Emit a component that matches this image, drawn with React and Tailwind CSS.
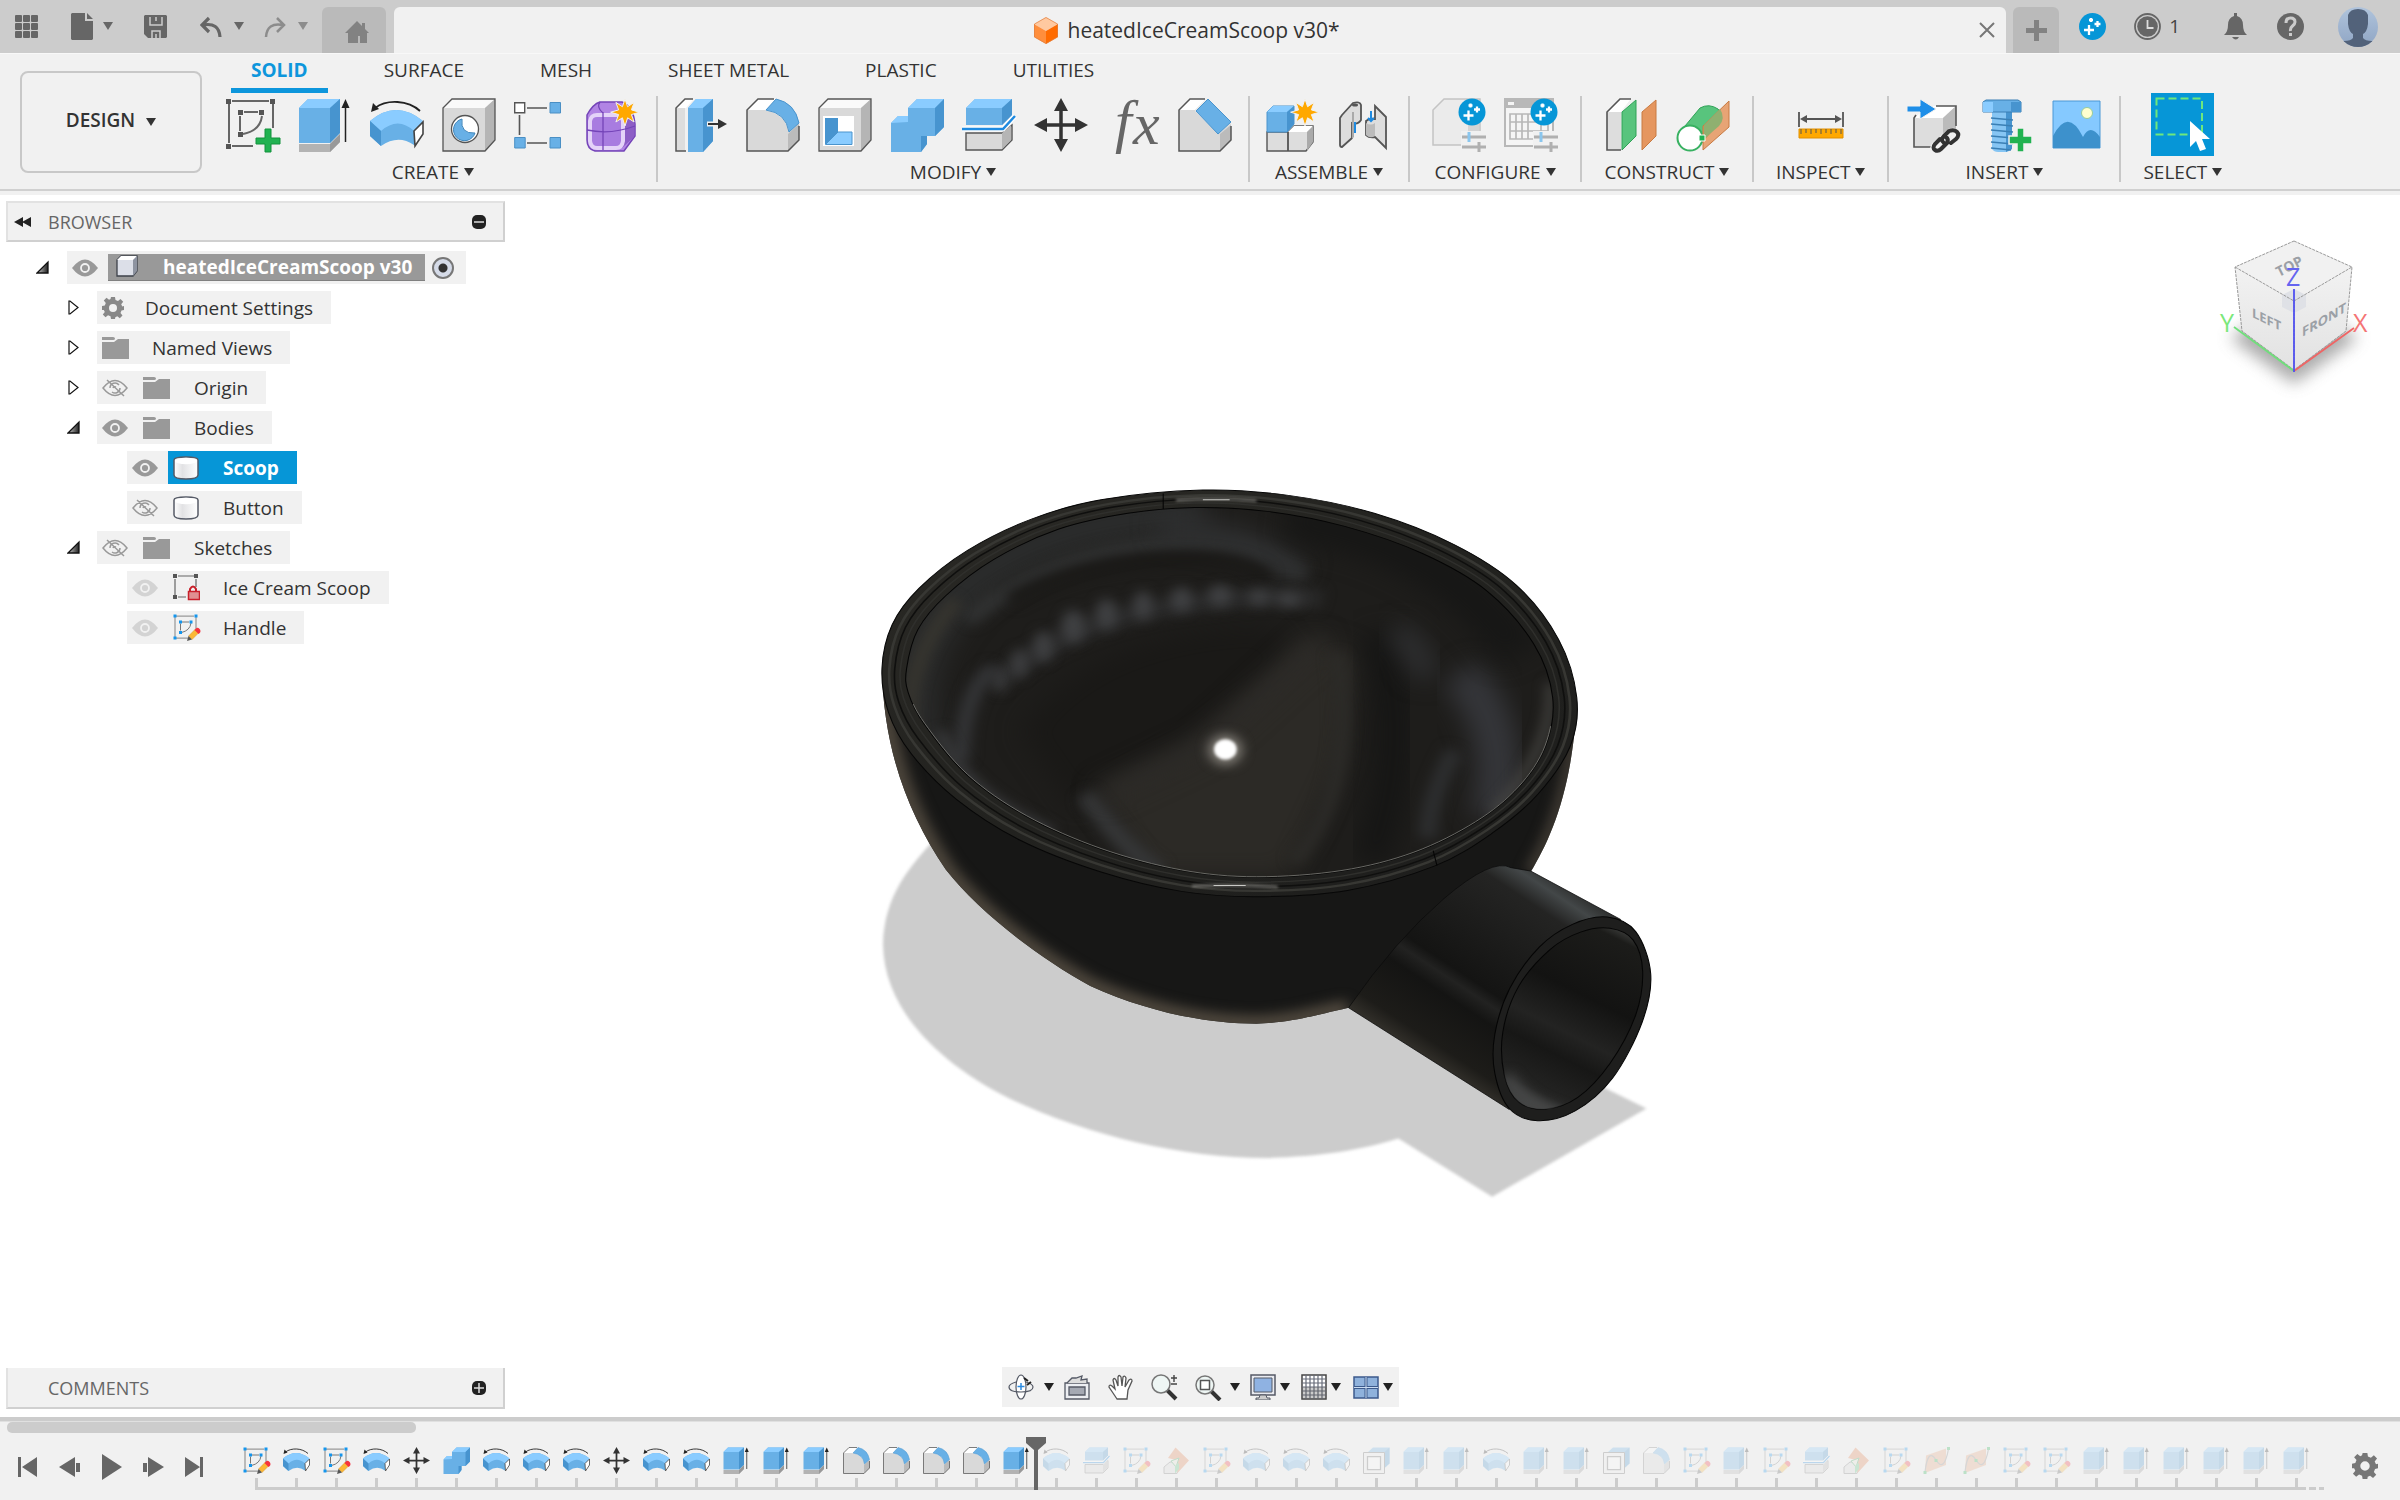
import { useState } from "react";

const BLUE = "#68b0e6";
const BLUE_TOP = "#8accff";
const BLUE_SIDE = "#4794cf";

// catmull-rom curve through a closed list of points
function smooth(pts) {
  const n = pts.length;
  let d = `M${pts[0][0]} ${pts[0][1]}`;
  for (let i = 0; i < n; i++) {
    const p0 = pts[(i - 1 + n) % n];
    const p1 = pts[i];
    const p2 = pts[(i + 1) % n];
    const p3 = pts[(i + 2) % n];
    d += `C${p1[0] + (p2[0] - p0[0]) / 6} ${p1[1] + (p2[1] - p0[1]) / 6} ${p2[0] - (p3[0] - p1[0]) / 6} ${p2[1] - (p3[1] - p1[1]) / 6} ${p2[0]} ${p2[1]}`;
  }
  return d + "Z";
}

function Caret({ className = "" }) {
  return (
    <svg viewBox="0 0 10 8" className={`w-[10px] h-2 shrink-0 ${className}`}>
      <path d="M0 0h10L5 8z" fill="currentColor" />
    </svg>
  );
}

/* ---------- ribbon icons, all on a 54 grid ---------- */

function SketchIcon() {
  return (
    <>
      <path d="M6 3h37M3 6v39M6 48h21M47 6v24" stroke="#666" strokeWidth="2" fill="none" />
      <path d="M18 14h14M14 18v15M36 18q-2 15-19 18" stroke="#666" strokeWidth="2" fill="none" />
      <path d="M0 1h5v5H0zM44 1h5v5h-5zM0 46h5v5H0zM12 12h5v5h-5zM33 12h5v5h-5zM12 34h5v5h-5z" fill="#555" />
      <path d="M39 31h6v9h9v6h-9v8h-6v-8h-9v-6h9z" fill="#21b251" stroke="#12923c" />
    </>
  );
}

function SketchEditIcon() {
  return (
    <>
      <path d="M6 4h36M4 6v40M6 48h24M46 6v24" stroke="#999" strokeWidth="2.500" fill="none" />
      <path d="M18 16h14M15 19v14M36 18q-2 15-19 19" stroke="#777" strokeWidth="2" fill="none" />
      <path d="M1 1h6v6H1zM43 1h6v6h-6zM1 45h6v6H1zM12 13h6v6h-6zM33 13h6v6h-6zM12 34h6v6h-6z" fill="#1496ee" />
      <path d="M45 30l7 7-14 14-7-7z" fill="#fbb836" stroke="#d8942a" />
      <path d="M43 32l4-4q4-2 7 3t-3 9z" fill="#f5333f" />
      <path d="M31 44l7 7-10 3z" fill="#555" />
    </>
  );
}

function ExtrudeIcon() {
  return (
    <>
      <path d="M1 46h31l10-10v8L32 54H1z" fill="#b3b3b3" />
      <path d="M32 54V46l10-10v8z" fill="#999" />
      <path d="M1 10L10 1h32v34L32 45H1z" fill={BLUE} />
      <path d="M1 10L10 1h32L32 10z" fill={BLUE_TOP} />
      <path d="M32 10L42 1v34L32 45z" fill={BLUE_SIDE} />
      <path d="M47.500 44V8" stroke="#222" strokeWidth="1.500" />
      <path d="M47.500 1l4 9h-8z" fill="#222" />
    </>
  );
}

function RevolveIcon() {
  return (
    <>
      <path d="M50 13C38 2 17 1 5 10" stroke="#222" strokeWidth="1.800" fill="none" />
      <path d="M1 14l2-9 6 6z" fill="#222" />
      <path d="M0 23Q26 1 53 23l-9 10v14q-16-11-33 1L0 38z" fill={BLUE} />
      <path d="M0 23Q26 1 53 23l-9 10Q28 18 11 33z" fill={BLUE_TOP} />
      <path d="M0 23l11 10v15L0 38z" fill={BLUE_SIDE} />
      <path d="M44 33l9-9v12l-8 12z" fill="#fff" stroke="#444" strokeWidth="1.600" />
    </>
  );
}

function Box({ children }) {
  return (
    <>
      <path d="M1 10L10 1h43v41L43 53H1z" fill="#d9d9d9" />
      <path d="M1 10L10 1h43L43 10z" fill="#fafafa" />
      <path d="M43 10L53 1v41L43 53z" fill="#b5b5b5" />
      <path d="M1 10L10 1h43v41L43 53H1z" fill="none" stroke="#555" strokeWidth="1.300" />
      {children}
    </>
  );
}

function HoleIcon() {
  return (
    <Box>
      <circle cx="23" cy="31" r="13.500" fill="#fff" stroke="#555" strokeWidth="1.300" />
      <path d="M20 21a11 11 0 1 0 13 14q-15 1-13-14z" fill={BLUE} stroke="#3f86bb" />
    </Box>
  );
}

function PatternIcon() {
  return (
    <>
      <path d="M13 10h20M5.500 17v20M13 45h20" stroke="#555" strokeWidth="1.600" />
      <path d="M.7 4.700h10v10H.7z" fill="#fff" stroke="#555" strokeWidth="1.400" />
      <path d="M36 4.500h10.500V15H36zM.7 39.500h10.500V50H.7zM36 39.500h10.500V50H36z" fill={BLUE} stroke="#4a8fc4" />
    </>
  );
}

function FormIcon() {
  return (
    <>
      <path d="M1 17Q7 6 14 4h22q11 4 13 22v12L38 53H9Q1 51 1 42z" fill="#b184e4" stroke="#7444b8" strokeWidth="1.500" />
      <path d="M36 24q4-2 12-5v20L36 50z" fill="#8d5ec6" />
      <path d="M4 23q1-6 7-6h19q6 0 7 6v20q-1 7-7 7H11q-6 0-7-7z" fill="#a87ce0" stroke="#e4d3f8" strokeWidth="4" />
      <path d="M17 14v38M1 32q24 5 48-4M14 4q-4 5 3 11" fill="none" stroke="#7444b8" strokeWidth="1.300" />
      <Burst />
    </>
  );
}

function Burst() {
  return (
    <path
      d="M39 1l2.600 7.700 6.500-4.300-2.700 7.500 8 2.300-8 2.400 2.700 7.400-6.500-4.200L39 28l-2.600-8.200-6.500 4.200 2.700-7.400-8-2.400 8-2.300-2.700-7.500 6.500 4.300z"
      fill="#ffa800"
      stroke="#f1f1f1"
      strokeWidth="1"
    />
  );
}

function PressPullIcon() {
  return (
    <>
      <path d="M2 10l9-9h9l-9 9v43H2z" fill="#ddd" />
      <path d="M2 10l9-9h9l-8 9z" fill="#fff" />
      <path d="M19 1h-8l-9 9v43h10" fill="none" stroke="#555" strokeWidth="1.500" />
      <path d="M14 10l8-9h17v42L29 54H14z" fill={BLUE} />
      <path d="M14 10l8-9h17l-10 9z" fill={BLUE_TOP} />
      <path d="M29 10L39 1v42L29 54z" fill={BLUE_SIDE} />
      <path d="M33 26h12" stroke="#f1f1f1" strokeWidth="5" />
      <path d="M34 26h12" stroke="#333" strokeWidth="2" />
      <path d="M44 21l9 5-9 5z" fill="#333" />
    </>
  );
}

function FilletIcon() {
  return (
    <>
      <path d="M1 12L12 1h18L20 12q20 5 23 22l10-9v17L42 53H1z" fill="#d9d9d9" />
      <path d="M1 12L12 1h18L20 12z" fill="#fff" />
      <path d="M42 36l11-10v16L42 53z" fill="#bbb" />
      <path d="M28 1H12L1 12v41h41l11-11V28" fill="none" stroke="#555" strokeWidth="1.500" />
      <path d="M20 12L30 1q19 4 23 24l-10 9Q40 15 20 12z" fill={BLUE} stroke="#4a94cd" />
    </>
  );
}

function ChamferIcon() {
  return (
    <>
      <path d="M1 12L12 1h16L17 13l23 23 13-11v17L42 53H1z" fill="#d9d9d9" />
      <path d="M1 12L12 1h16L17 12z" fill="#fff" />
      <path d="M42 36l11-9v15L42 53z" fill="#bbb" />
      <path d="M27 1H12L1 12v41h41l11-11V28" fill="none" stroke="#555" strokeWidth="1.500" />
      <path d="M18 13L30 1l23 23-13 12z" fill={BLUE} stroke="#4a94cd" />
    </>
  );
}

function ShellIcon() {
  return (
    <Box>
      <path d="M5 18h31v30H5z" fill="#fff" />
      <path d="M7 20h13v15L8 46H7z" fill={BLUE_SIDE} />
      <path d="M7.500 46.500L20 34h14v12.500z" fill={BLUE_TOP} stroke="#4a94cd" />
    </Box>
  );
}

function CombineIcon() {
  return (
    <>
      <path d="M1 25l7-7h10v-8l9-9h27v28l-9 9h-8v8l-6 8H1z" fill={BLUE} />
      <path d="M1 25l7-7h10v6zM18 10l9-9h27l-9 9z" fill={BLUE_TOP} />
      <path d="M45 10l9-9v28l-9 9zM31 38h6v8l-6 8z" fill={BLUE_SIDE} />
    </>
  );
}

function SplitIcon() {
  return (
    <>
      <path d="M4 10l9-9h37v16L40 27H4z" fill={BLUE} />
      <path d="M4 10l9-9h37L40 10z" fill={BLUE_TOP} />
      <path d="M40 10l10-9v16L40 27z" fill={BLUE_SIDE} />
      <path d="M4 35h36l10-8v15L40 52H4z" fill="#d9d9d9" stroke="#555" strokeWidth="1.400" />
      <path d="M40 35l9-8v15l-9 9z" fill="#b5b5b5" />
      <path d="M0 31h41l12-13" fill="none" stroke="#fff" strokeWidth="5" />
      <path d="M0 31h41l12-13" fill="none" stroke="#1e8ae0" strokeWidth="2.500" />
    </>
  );
}

function MoveIcon() {
  return (
    <>
      <path d="M27 8v38M8 27h38" stroke="#333" strokeWidth="3.500" />
      <path d="M27 0l7 13H20zM27 54l7-13H20zM0 27l13-7v14zM54 27l-13-7v14z" fill="#333" />
    </>
  );
}

function FxIcon() {
  return (
    <g className="italic font-['Liberation_Serif',serif]" fill="#666">
      <text x="9" y="43" className="text-[60px]">f</text>
      <text x="27" y="46" className="text-[60px]">x</text>
    </g>
  );
}

function NewComponentIcon() {
  return (
    <>
      <path d="M1 34h21v19H1zM22 34l6-6h19v16l-7 9H22z" fill="#ddd" stroke="#555" strokeWidth="1.400" />
      <path d="M22 34l6-6h19l-6 6z" fill="#fff" />
      <path d="M41 34l6-6v16l-6 9z" fill="#aaa" />
      <path d="M22 34v19" stroke="#555" strokeWidth="1.400" />
      <path d="M1 14l6-6h21v18l-7 8H1z" fill={BLUE} stroke="#4a94cd" />
      <path d="M1 14l6-6h21l-7 6z" fill={BLUE_TOP} />
      <path d="M21 14l7-6v18l-7 8z" fill={BLUE_SIDE} />
      <Burst />
    </>
  );
}

function JointIcon() {
  return (
    <>
      <path d="M4 17l11-12q7-2 8 2v15q-3 5-9 3v15L4 49q-2 0-2-2V20z" fill="#ddd" stroke="#555" strokeWidth="1.800" />
      <path d="M14 14v27l2-2V14z" fill="#aaa" />
      <ellipse cx="17" cy="7" rx="3" ry="1.500" fill="#555" />
      <path d="M48 19L37 8v13q-6-1-9 2v14q3 3 9 2l11 11z" fill="#ddd" stroke="#555" strokeWidth="1.800" />
      <path d="M28 25q5 3 9 0v13q-5 3-9-1z" fill="#bbb" />
      <path d="M17 24v11M33 13v10M30 20l3 3 3-3" stroke="#1e8ae0" strokeWidth="2" fill="none" />
    </>
  );
}

function Sparkle({ cx, cy }) {
  return (
    <>
      <circle cx={cx} cy={cy} r="13.500" fill="#0696d7" />
      <path
        transform={`translate(${cx - 13.5} ${cy - 13.5})`}
        d="M10 12v10M5 17h10M18.500 8v6M15.500 11h6M12 5v4M10 7h4"
        stroke="#fff"
        strokeWidth="2.300"
      />
    </>
  );
}

function Sliders() {
  return (
    <>
      <path d="M29 33h26v21H29z" fill="#f1f1f1" />
      <path d="M30 39h24M30 49h24M47 44v10" stroke="#b0b0b0" strokeWidth="3" />
      <path d="M37 34v10" stroke="#8ac6ee" strokeWidth="3" />
    </>
  );
}

function ConfigureIcon() {
  return (
    <>
      <path d="M1 12L12 1h36v33L36 47H1z" fill="#ebebeb" stroke="#c4c4c4" strokeWidth="1.500" />
      <path d="M36 12L47 2v32L36 46z" fill="#d4d4d4" />
      <Sliders />
      <Sparkle cx={40} cy={14} />
    </>
  );
}

function ConfigTableIcon() {
  return (
    <>
      <path d="M1 1h48v47H1z" fill="#f5f5f5" stroke="#b8b8b8" strokeWidth="2" />
      <path d="M1 1h48v9H1z" fill="#b8b8b8" />
      <path d="M4 4h6v3H4z" fill="#f5f5f5" />
      <path d="M6 16h38v25H6zM6 24h38M6 33h38M12 16v25M18 16v25M24 16v25M37 16v25" fill="none" stroke="#b8b8b8" strokeWidth="1.700" />
      <Sliders />
      <Sparkle cx={40} cy={14} />
    </>
  );
}

function OffsetPlaneIcon() {
  return (
    <>
      <path d="M3 14L16 1h11L17 14v38H3z" fill="#ddd" />
      <path d="M3 14L16 1h11L17 14z" fill="#fff" />
      <path d="M27 1H16L3 14v38h14" fill="none" stroke="#555" strokeWidth="1.600" />
      <path d="M18 14L32 2v36L18 52z" fill="#58c47d" stroke="#2fa257" />
      <path d="M38 14L52 2v36L38 52z" fill="#e5965f" stroke="#c87a42" />
    </>
  );
}

function TangentPlaneIcon() {
  return (
    <>
      <path d="M4 34L24 10q9-5 18 1 6 6 1 14L24 47z" fill="#58c47d" stroke="#2fa257" />
      <circle cx="14" cy="40" r="12.500" fill="#fff" stroke="#37b161" strokeWidth="2" />
      <path d="M27 28L53 3v26L27 52z" fill="#e5965f" fillOpacity=".85" stroke="#c87a42" />
      <path d="M28 27l16-16q6 9-1 17L28 41z" fill="#8fb070" />
      <path d="M23 37h6v6h-6z" fill="#21b251" stroke="#fff" />
    </>
  );
}

function MeasureIcon() {
  return (
    <>
      <path d="M5 14v15M49 14v15M8 21h38" stroke="#555" strokeWidth="1.800" />
      <path d="M6 21l7-4v8zM48 21l-7-4v8z" fill="#555" />
      <path d="M5 31h44v9H5z" fill="#ffa800" stroke="#e08f00" />
      <path d="M7 31v5M12 31v4M17 31v5M22 31v4M27 31v5M32 31v4M37 31v5M42 31v4M47 31v5" stroke="#555" />
    </>
  );
}

function InsertDeriveIcon() {
  return (
    <>
      <path d="M9 20l14-12h28v23L38 49H9z" fill="#ddd" />
      <path d="M9 20l14-12h28L38 20z" fill="#fff" />
      <path d="M38 20L51 8v23L38 43z" fill="#bbb" />
      <path d="M31 8h20v20M11 17l-2 3v29h20" fill="none" stroke="#555" strokeWidth="1.600" />
      <path d="M2 8h13V1l16 10-16 10v-7H2z" fill="#1e8ee8" stroke="#f1f1f1" />
      <g fill="none" strokeLinecap="round">
        <path d="M35 43l-5 4q-3 5 1 6t5-2l6-6q2-4-1-6M39 46q-4-3 0-7l6-5q5-2 8 1t-1 7l-5 4" stroke="#f1f1f1" strokeWidth="7" />
        <path d="M35 41l-5 5q-3 4 0 6t6-1l6-6q2-4-1-6M39 45q-4-3 0-7l5-5q5-2 8 1t-1 7l-5 4" stroke="#333" strokeWidth="4" />
      </g>
    </>
  );
}

function FastenerIcon() {
  return (
    <>
      <path d="M15 13h20v38q-3 3-6 3h-8q-4 0-6-3z" fill="#86c5f3" />
      <path d="M29 13h6v38l-6 3z" fill={BLUE_SIDE} />
      <path d="M14 20l22 2M14 26l22 2M14 32l22 2M14 38l22 2M14 44l22 2M14 50l20 2" stroke="#3a7fb4" strokeWidth="1.500" />
      <path d="M6 4l3-2h32l3 2v10H6z" fill={BLUE} stroke="#3a7fb4" />
      <path d="M6 4h10v10H6z" fill={BLUE_TOP} />
      <path d="M34 4h10v10H34z" fill={BLUE_SIDE} />
      <path d="M40 30h7v8h8v8h-8v8h-7v-8h-8v-8h8z" fill="#21b251" stroke="#f1f1f1" strokeWidth="1.500" />
    </>
  );
}

function CanvasIcon() {
  return (
    <>
      <path d="M4 3h47v47H4z" fill="#85c9ff" stroke="#4b98d6" />
      <circle cx="38" cy="15" r="5.500" fill="#ffffcf" stroke="#9c9" />
      <path d="M4 38Q19 9 34 39q7-14 17 0v11H4z" fill="#3d91cc" />
    </>
  );
}

function MidplaneIcon() {
  return (
    <>
      <path d="M2 40l12-10h22L28 53H2z" fill="#ddd" stroke="#777" strokeWidth="2" />
      <path d="M25 1l27 26-23 25V27L10 22z" fill="#e5814f" />
      <path d="M16 28l16-6-6 18z" fill="#e9e9d9" stroke="#2fa257" strokeWidth="2" />
      <path d="M24 38l8-6v12l-8 9z" fill="#58c47d" />
    </>
  );
}

function PathPlaneIcon() {
  return (
    <>
      <path d="M6 17L46 3v33L4 52z" fill="#e9a67d" />
      <path d="M4 50q6-50 22-24t25-22" fill="none" stroke="#888" strokeWidth="2.500" />
      <path d="M1 48h6v6H1zM23 24h6v6h-6zM48 0h6v6h-6z" fill="#21b251" />
    </>
  );
}

function OffsetFaceIcon() {
  return (
    <>
      <path d="M10 10l10-9h33v32L43 42H10z" fill={BLUE} />
      <path d="M43 10L53 1v32l-10 9z" fill={BLUE_SIDE} />
      <path d="M1 11h42v42H1z" fill="#eee" stroke="#666" strokeWidth="2" />
      <path d="M9 19h26v26H9z" fill="#fff" stroke="#666" strokeWidth="2.500" />
    </>
  );
}

function Icon({ of: Shape, className = "w-[54px] h-[54px]" }) {
  return (
    <svg viewBox="0 0 54 54" className={`${className} shrink-0 overflow-visible`}>
      <Shape />
    </svg>
  );
}

const groups = [
  {
    name: "CREATE",
    pad: "px-4",
    tools: [
      ["Create Sketch", SketchIcon],
      ["Extrude", ExtrudeIcon],
      ["Revolve", RevolveIcon],
      ["Hole", HoleIcon],
      ["Pattern", PatternIcon],
      ["Create Form", FormIcon],
    ],
  },
  {
    name: "MODIFY",
    pad: "px-4",
    tools: [
      ["Press Pull", PressPullIcon],
      ["Fillet", FilletIcon],
      ["Shell", ShellIcon],
      ["Combine", CombineIcon],
      ["Split Body", SplitIcon],
      ["Move", MoveIcon],
      ["Change Parameters", FxIcon],
      ["Chamfer", ChamferIcon],
    ],
  },
  { name: "ASSEMBLE", pad: "px-4", tools: [["New Component", NewComponentIcon], ["Joint", JointIcon]] },
  { name: "CONFIGURE", pad: "px-[22px]", tools: [["Configure Model", ConfigureIcon], ["Configuration Table", ConfigTableIcon]] },
  { name: "CONSTRUCT", pad: "px-[22px]", tools: [["Offset Plane", OffsetPlaneIcon], ["Tangent Plane", TangentPlaneIcon]] },
  { name: "INSPECT", pad: "px-[22px]", tools: [["Measure", MeasureIcon]] },
  { name: "INSERT", pad: "px-4", tools: [["Insert Derive", InsertDeriveIcon], ["Insert Fastener", FastenerIcon], ["Canvas", CanvasIcon]] },
];

function TitleBar() {
  return (
    <header className="flex h-[53px] items-end bg-[#ccc] text-[#666]">
      <div className="flex h-[53px] w-[322px] shrink-0 items-start pt-[13px] pl-[15px]">
        <button aria-label="Data panel" className="mr-[33px] pt-[2px]">
          <svg viewBox="0 0 23 23" className="w-[23px] h-[23px]" fill="currentColor">
            {[0, 8, 16].map((y) => [0, 8, 16].map((x) => <rect key={`${x}-${y}`} x={x} y={y} width="7" height="7" rx="1" />))}
          </svg>
        </button>
        <button aria-label="File" className="mr-[31px] flex gap-[10px]">
          <svg viewBox="0 0 22 27" className="w-[22px] h-[27px]" fill="currentColor">
            <path d="M1 0h13v8h8v18l-1 1H1l-1-1V1zM16 0l6 6h-6z" />
          </svg>
          <Caret className="mt-[9px] w-3" />
        </button>
        <button aria-label="Save" className="mr-[33px] pt-[2px]">
          <svg viewBox="0 0 23 23" className="w-[23px] h-[23px]">
            <path d="M1 0h21l1 1v21l-1 1H4l-4-4V1z" fill="currentColor" />
            <path d="M6 2v8h12V2M8 23v-7h8v7M12 19v4M12 2v4" fill="none" stroke="#ccc" strokeWidth="1.500" />
          </svg>
        </button>
        <button aria-label="Undo" className="mr-[20px] flex gap-[12px] pt-[3px]">
          <svg viewBox="0 0 22 22" className="w-[22px] h-[22px]" fill="none" stroke="currentColor" strokeWidth="3.200">
            <path d="M9 2L2 9l7 7M3 9q16-3 17 12" />
          </svg>
          <Caret className="mt-[6px] w-3" />
        </button>
        <button aria-label="Redo" className="flex gap-[12px] pt-[3px] text-[#8c8c8c]">
          <svg viewBox="0 0 22 22" className="w-[22px] h-[22px]" fill="none" stroke="currentColor" strokeWidth="2.500">
            <path d="M13 2l7 7-7 7M19 9Q3 6 2 21" />
          </svg>
          <Caret className="mt-[6px] w-3" />
        </button>
      </div>
      <button aria-label="Home" className="mr-2 flex h-[46px] w-16 shrink-0 items-center justify-center rounded-t-md bg-[#bababa] pl-[6px] pt-1 text-[#828282]">
        <svg viewBox="0 0 24 22" className="w-6 h-[22px]" fill="currentColor">
          <path d="M12 0l5 5V2h3v6l4 4h-2v10h-7v-7h-2v7H3V12H0z" />
        </svg>
      </button>
      <div className="flex h-[46px] flex-1 items-center justify-center rounded-t-md bg-[#f1f1f1]">
        <div className="flex flex-1 items-center justify-center gap-[10px]">
          <svg viewBox="0 0 24 27" className="w-6 h-[27px]">
            <path d="M12 0l12 7-12 7L0 7z" fill="#ffc9a0" />
            <path d="M0 7l12 7v13L0 20z" fill="#ff8e3c" />
            <path d="M24 7l-12 7v13l12-7z" fill="#ff6b00" />
            <path d="M12 .5l11.500 6.500v13L12 26.500.5 20V7z" fill="none" stroke="#e08040" strokeWidth=".7" />
          </svg>
          <h1 className="text-[21px] leading-6 text-[#333]">heatedIceCreamScoop v30*</h1>
        </div>
        <button aria-label="Close document" className="mr-[11px] text-[#777]">
          <svg viewBox="0 0 16 16" className="w-4 h-4" stroke="currentColor" strokeWidth="2">
            <path d="M1 1l14 14M15 1L1 15" />
          </svg>
        </button>
      </div>
      <button aria-label="New document" className="ml-[7px] flex h-[46px] w-[46px] shrink-0 items-center justify-center rounded-t-md bg-[#bababa] text-[#828282]">
        <svg viewBox="0 0 21 21" className="w-[21px] h-[21px]" stroke="currentColor" strokeWidth="5">
          <path d="M10.500 0v21M0 10.500h21" />
        </svg>
      </button>
      <div className="flex h-[53px] shrink-0 items-start pt-[7px] pl-5 pr-[22px]">
        <button aria-label="Extensions" className="mr-7 pt-[6px]">
          <svg viewBox="0 0 27 27" className="w-[27px] h-[27px]">
            <Sparkle cx={13.5} cy={13.5} />
          </svg>
        </button>
        <button className="mr-11 flex items-center gap-2 pt-[6px] text-[19px] leading-[27px] text-[#444]" aria-label="Job status 1">
          <svg viewBox="0 0 27 27" className="w-[27px] h-[27px] text-[#666]">
            <circle cx="13.500" cy="13.500" r="12.500" fill="none" stroke="currentColor" strokeWidth="1.800" />
            <circle cx="13.500" cy="13.500" r="10.300" fill="currentColor" />
            <path d="M13.500 7v8h6" fill="none" stroke="#ddd" strokeWidth="1.800" />
          </svg>
          1
        </button>
        <button aria-label="Notifications" className="mr-[30px] pt-[6px]">
          <svg viewBox="0 0 23 27" className="w-[23px] h-[27px]" fill="currentColor">
            <path d="M10 0h3v3q6 2 6 9 0 7 4 10H0q4-3 4-10 0-7 6-9zM8 24h7q-3 5-7 0z" />
          </svg>
        </button>
        <button aria-label="Help" className="mr-[34px] pt-[6px]">
          <svg viewBox="0 0 27 27" className="w-[27px] h-[27px]">
            <circle cx="13.500" cy="13.500" r="13.500" fill="currentColor" />
            <path d="M9 10q0-5 4.500-5t4.500 4q0 2-2.500 4T13.500 18" fill="none" stroke="#ccc" strokeWidth="3" />
            <path d="M12 20h3v3h-3z" fill="#ccc" />
          </svg>
        </button>
        <button aria-label="Account">
          <svg viewBox="0 0 40 40" className="w-10 h-10">
            <defs>
              <clipPath id="avatar"><circle cx="20" cy="20" r="20" /></clipPath>
              <linearGradient id="avatarBg" x1="0" y1="0" x2="0" y2="1">
                <stop offset="0" stopColor="#b0c4dc" />
                <stop offset="1" stopColor="#8fa5c4" />
              </linearGradient>
            </defs>
            <g clipPath="url(#avatar)">
              <path d="M0 0h40v40H0z" fill="url(#avatarBg)" />
              <path d="M10 8q2-6 10-6t10 6v9q-1 8-5 10v4q2 3 9 3l6 2v6H0v-6l6-2q7 0 9-3v-4q-4-2-5-10z" fill="#52627a" />
            </g>
          </svg>
        </button>
      </div>
    </header>
  );
}

function Ribbon() {
  const tabs = ["SOLID", "SURFACE", "MESH", "SHEET METAL", "PLASTIC", "UTILITIES"];
  const [tab, setTab] = useState("SOLID");

  return (
    <div className="border-t border-[#f8f8f8] bg-[#f1f1f1] pb-[4px]">
      <div className="flex h-[137px] items-start border-b-2 border-[#d0d0d0] pl-5">
        <button className="mt-[17px] flex h-[102px] w-[182px] shrink-0 items-center justify-center gap-[11px] rounded-lg border-2 border-[#c8c8c8] pb-1 text-[19px] font-semibold">
          DESIGN <Caret className="mt-1" />
        </button>
        <div className="ml-2">
          <div role="tablist" className="ml-[21px] flex gap-9">
            {tabs.map((t) => (
              <button
                key={t}
                role="tab"
                aria-selected={t === tab}
                onClick={() => setTab(t)}
                className={`h-[39px] border-b-[5px] px-5 pb-[3px] text-[19px] leading-6 ${t === tab ? "border-[#0d96dc] font-bold text-[#0d96dc]" : "border-transparent"}`}
              >
                {t}
              </button>
            ))}
          </div>
          <div className="mt-[3px] flex h-[86px]">
            {groups.map((g) => (
              <div key={g.name} className={`flex flex-col items-center border-r-2 border-[#c8c8c8] ${g.pad}`}>
                <div className="flex gap-[18px] pt-[2px]">
                  {g.tools.map(([label, shape]) => (
                    <button key={label} aria-label={label}>
                      <Icon of={shape} />
                    </button>
                  ))}
                </div>
                <button className="mt-2 flex items-center gap-[5px] text-[19px] leading-6">
                  {g.name} <Caret />
                </button>
              </div>
            ))}
            <div className="flex flex-col items-center px-[22px]">
              <button aria-label="Window selection" className="-mt-[3px] flex h-[63px] w-[63px] items-center justify-center bg-[#0696d7]">
                <svg viewBox="0 0 63 63" className="w-[63px] h-[63px]">
                  <path d="M5.500 5.500h45.500v36H5.500z" fill="none" stroke="#6ee87d" strokeWidth="2" strokeDasharray="8 4" />
                  <path d="M39 28v26l6-6 4 10 6-2-4-10h8z" fill="#fff" />
                </svg>
              </button>
              <button className="mt-1 flex items-center gap-[5px] text-[19px] leading-6">
                SELECT <Caret />
              </button>
            </div>
          </div>
        </div>
      </div>
    </div>
  );
}

/* ---------- browser tree ---------- */

function Eye({ faint, off }) {
  if (off) {
    return (
      <svg viewBox="0 0 26 18" className="w-[26px] h-[18px] shrink-0" fill="none" stroke="#999" strokeWidth="1.500">
        <path d="M1 9Q13-6 25 9 13 24 1 9zM5 1l17 16" />
        <path d="M8 9a5 5 0 0 1 9-3M18 9a5 5 0 0 1-8 4M11 9a2 2 0 0 1 3-1" />
      </svg>
    );
  }
  const c = faint ? "#d3d3d3" : "#999";
  return (
    <svg viewBox="0 0 26 18" className="w-[26px] h-[18px] shrink-0">
      <path d="M0 9Q13-8 26 9 13 26 0 9z" fill={c} />
      <circle cx="13" cy="9" r="4" fill="none" stroke="#f1f1f1" strokeWidth="1.800" />
    </svg>
  );
}

function Folder() {
  return (
    <svg viewBox="0 0 27 22" className="w-[27px] h-[22px] shrink-0" fill="#999">
      <path d="M0 5h12l4-3h11v20H0zM0 0h11q2 0 2 1.500T11 3H0z" />
    </svg>
  );
}

const GEAR =
  "M9 0h4l.5 3 2.500 1 2.500-2 2.700 2.700-2 2.500L20.300 9.500 22 9v4l-2.500.5-1 2.500 2 2.500-2.700 2.700-2.500-2-2 1L13 22H9l-.5-2.800-2.500-1-2.500 2L.8 17.500l2-2.500-1-2L0 13V9l2.800-.5 1-2.500-2-2.500L4.500 .8l2.500 2 1.500-.8zM11 7a4 4 0 1 0 0 8 4 4 0 0 0 0-8z";

function Gear({ className }) {
  return (
    <svg viewBox="0 0 22 22" className={`${className} shrink-0`} fill="currentColor" fillRule="evenodd">
      <path d={GEAR} />
    </svg>
  );
}

function Body() {
  return (
    <svg viewBox="0 0 26 24" className="w-[26px] h-6 shrink-0">
      <defs>
        <linearGradient id="bodyFill">
          <stop offset="0" stopColor="#fff" />
          <stop offset=".35" stopColor="#e2e2e4" />
          <stop offset="1" stopColor="#fff" />
        </linearGradient>
      </defs>
      <path d="M1 4q0-3 12-3t12 3v15q0 4-12 4T1 19z" fill="url(#bodyFill)" stroke="#555a66" strokeWidth="1.500" />
      <ellipse cx="13" cy="5" rx="11" ry="3.200" fill="#fff" />
    </svg>
  );
}

function LockedSketch() {
  return (
    <svg viewBox="0 0 27 27" className="w-[27px] h-[27px] shrink-0">
      <path d="M5 2h16M2 5v16M5 23h8M23 5v8" stroke="#666" strokeWidth="1.200" fill="none" />
      <path d="M0 0h4v4H0zM21 0h4v4h-4zM0 21h4v4H0z" fill="#555" />
      <path d="M17 17v-2q3-5 6 0v2" fill="none" stroke="#c8202a" strokeWidth="2" />
      <path d="M15.500 17.500h11v8h-11z" fill="#e09090" stroke="#c8202a" strokeWidth="1.500" />
    </svg>
  );
}

function Twisty({ open }) {
  return (
    <svg viewBox="0 0 13 15" className="w-[13px] h-[15px]">
      <defs>
        <linearGradient id="twisty">
          <stop offset="0" stopColor="#ccc" />
          <stop offset="1" stopColor="#222" />
        </linearGradient>
      </defs>
      {open ? (
        <path d="M1 13L12 2v11z" fill="url(#twisty)" stroke="#111" strokeWidth="1.300" />
      ) : (
        <path d="M2 1h1l8 6.500L3 14H2z" fill="#fff" stroke="#111" strokeWidth="1.200" />
      )}
    </svg>
  );
}

const tree = [
  { name: "Document Settings", indent: "pl-[67px]", twisty: "closed", icon: <Gear className="w-[22px] h-[22px] text-[#888]" />, gap: "ml-[21px]" },
  { name: "Named Views", indent: "pl-[67px]", twisty: "closed", icon: <Folder />, gap: "ml-[23px]" },
  { name: "Origin", indent: "pl-[67px]", twisty: "closed", eye: <Eye off />, icon: <Folder />, gap: "ml-6" },
  { name: "Bodies", indent: "pl-[67px]", twisty: "open", eye: <Eye />, icon: <Folder />, gap: "ml-6" },
  { name: "Scoop", indent: "pl-[97px]", eye: <Eye />, icon: <Body />, gap: "ml-6", selected: true },
  { name: "Button", indent: "pl-[97px]", eye: <Eye off />, icon: <Body />, gap: "ml-6" },
  { name: "Sketches", indent: "pl-[67px]", twisty: "open", eye: <Eye off />, icon: <Folder />, gap: "ml-6" },
  { name: "Ice Cream Scoop", indent: "pl-[97px]", eye: <Eye faint />, icon: <LockedSketch />, gap: "ml-[23px]" },
  { name: "Handle", indent: "pl-[97px]", eye: <Eye faint />, icon: <Icon of={SketchEditIcon} className="w-[27px] h-[27px]" />, gap: "ml-[23px]" },
];

function BrowserPanel() {
  return (
    <section className="relative w-[505px] pl-[6px] pt-[6px]">
      <div className="flex h-[41px] items-center border-2 border-[#d0d0d0] border-t-[#e2e2e2] border-l-[#e2e2e2] bg-[#f1f1f1] pl-[6px] pr-[17px]">
        <button aria-label="Collapse browser">
          <svg viewBox="0 0 17 10" className="w-[17px] h-[10px]" fill="#222">
            <path d="M9 0v10L0 5zM17 0v10L8 5z" />
          </svg>
        </button>
        <h2 className="ml-[17px] flex-1 text-[18px] leading-6 text-[#666]">BROWSER</h2>
        <button aria-label="Minimize browser">
          <svg viewBox="0 0 14 14" className="w-[14px] h-[14px]">
            <rect width="14" height="14" rx="5" fill="#222" />
            <path d="M2 7h10" stroke="#ddd" strokeWidth="1.500" />
          </svg>
        </button>
      </div>
      <ul className="-ml-[6px] mt-[9px] flex flex-col gap-[7px] text-[19px] leading-6">
        <li className="flex h-[33px] items-center pl-9">
          <button aria-label="Collapse document"><Twisty open /></button>
          <div className="ml-[18px] flex h-[33px] items-center bg-[#f1f1f1] pl-[5px] pr-3">
            <Eye />
            <div className="ml-[10px] flex h-[27px] items-center border-b border-[#808080] bg-[#999] pl-2 pr-[13px] font-bold text-white">
              <svg viewBox="0 0 22 22" className="mb-[2px] w-[22px] h-[22px]">
                <path d="M1 5l4-4h16v15l-4 5H1z" fill="#dcdfe8" stroke="#3d414a" strokeWidth="1.300" />
                <path d="M1 5l4-4h16l-4 4z" fill="#fff" />
                <path d="M17 5l4-4v15l-4 5z" fill="#8d93a0" />
              </svg>
              <span className="ml-[25px]">heatedIceCreamScoop v30</span>
            </div>
            <input
              type="radio"
              name="active"
              defaultChecked
              aria-label="Activate component"
              className="ml-[7px] h-[22px] w-[22px] appearance-none rounded-full border-2 border-[#777] bg-[radial-gradient(circle,#333_0_4px,#d5dbe8_5px_9px)]"
            />
          </div>
        </li>
        {tree.map((row) => (
          <li key={row.name} className={`flex h-[33px] items-center ${row.indent}`}>
            <span className="w-[30px] shrink-0">
              {row.twisty && (
                <button aria-label={`Toggle ${row.name}`} className="block">
                  <Twisty open={row.twisty === "open"} />
                </button>
              )}
            </span>
            <div className="flex h-[33px] items-center bg-[#f1f1f1] pl-[5px]">
              {row.eye && <span className="mr-[10px] flex">{row.eye}</span>}
              <div className={`flex h-[33px] items-center pr-[18px] ${row.eye ? "pl-[5px]" : ""} ${row.selected ? "bg-[#0696d7] font-bold text-white" : ""}`}>
                {row.icon}
                <span className={row.gap}>{row.name}</span>
              </div>
            </div>
          </li>
        ))}
      </ul>
    </section>
  );
}

/* ---------- viewport ---------- */

const rimOuter = [[41, 430], [60, 340], [110, 265], [200, 187], [320, 122], [450, 82], [640, 62], [800, 73], [960, 110], [1110, 175], [1225, 258], [1304, 370], [1338, 490], [1326, 590], [1265, 690], [1180, 770], [1072, 838], [910, 888], [740, 901], [600, 890], [450, 850], [300, 785], [180, 700], [95, 605], [53, 520]];
const rimInner = [[87, 430], [108, 350], [160, 280], [250, 205], [370, 143], [500, 110], [625, 98], [760, 106], [905, 137], [1050, 193], [1170, 270], [1258, 380], [1293, 490], [1280, 590], [1230, 675], [1150, 747], [1035, 810], [900, 848], [740, 861], [600, 847], [450, 803], [310, 735], [200, 650], [120, 545], [90, 480]];
const mouthOuter = [[1395, 943], [1448, 973], [1476, 1060], [1460, 1160], [1405, 1275], [1335, 1343], [1265, 1363], [1212, 1338], [1185, 1265], [1185, 1185], [1213, 1090], [1268, 1005], [1330, 958]];
const mouthInner = [[1400, 966], [1443, 990], [1461, 1055], [1448, 1145], [1400, 1245], [1340, 1315], [1280, 1339], [1230, 1325], [1203, 1270], [1200, 1180], [1230, 1085], [1288, 1010], [1345, 974]];
const bowl = "M41 430C44 600 90 730 160 845 220 930 330 1025 430 1085 540 1140 650 1163 740 1163 810 1160 850 1145 912 1130L1252 850C1290 780 1330 680 1338 500L700 300z";
const ribs = [[260, 455, 9, 26], [298, 420, 13, 30], [342, 385, 17, 32], [398, 343, 22, 34], [460, 318, 20, 32], [528, 300, 18, 30], [600, 288, 20, 26], [672, 280, 22, 22], [745, 284, 20, 16], [800, 288, 24, 14]];

// ring halfway between the two rim curves
const between = (t) => rimOuter.map(([x, y], i) => [x + (rimInner[i][0] - x) * t, y + (rimInner[i][1] - y) * t]);

function Blur({ id, size }) {
  return (
    <filter id={id} x="-60%" y="-60%" width="220%" height="220%" colorInterpolationFilters="sRGB">
      <feGaussianBlur stdDeviation={size} />
    </filter>
  );
}

function Model() {
  return (
    <svg viewBox="0 0 840 760" className="absolute left-[860px] top-[265px] w-[840px] h-[760px]" role="img" aria-label="Ice cream scoop model">
      <defs>
        <Blur id="b4" size="3" />
        <Blur id="b12" size="12" />
        <Blur id="b22" size="24" />
        <clipPath id="inside"><path d={smooth(rimInner)} /></clipPath>
        <clipPath id="lower"><path d="M0 500L1568 560V1000H0z" /></clipPath>
        <clipPath id="bowlClip"><path d={bowl} /></clipPath>
        <clipPath id="mouth"><path d={smooth(mouthInner)} /></clipPath>
        <linearGradient id="pipe" gradientUnits="userSpaceOnUse" x1="1330" y1="880" x2="1060" y2="1250">
          <stop offset="0" stopColor="#2c2d2c" />
          <stop offset=".07" stopColor="#434748" />
          <stop offset=".16" stopColor="#242423" />
          <stop offset=".45" stopColor="#191918" />
          <stop offset=".58" stopColor="#141413" />
          <stop offset=".63" stopColor="#222221" />
          <stop offset=".7" stopColor="#141413" />
          <stop offset=".9" stopColor="#1d1c19" />
          <stop offset="1" stopColor="#38352f" />
        </linearGradient>
        <linearGradient id="bore" gradientUnits="userSpaceOnUse" x1="1430" y1="960" x2="1230" y2="1320">
          <stop offset="0" stopColor="#4a4b49" />
          <stop offset=".08" stopColor="#1c1c1a" />
          <stop offset=".4" stopColor="#131312" />
          <stop offset=".6" stopColor="#232322" />
          <stop offset=".72" stopColor="#171716" />
          <stop offset=".92" stopColor="#242423" />
          <stop offset="1" stopColor="#3e3f3f" />
        </linearGradient>
        <linearGradient id="rim" x1="0" y1="0" x2="1" y2="1">
          <stop offset="0" stopColor="#2a2925" />
          <stop offset=".5" stopColor="#22221f" />
          <stop offset="1" stopColor="#1d1d1c" />
        </linearGradient>
      </defs>
      <g transform="scale(.5357 .4847)">
        <path
          d="M150 770C90 840 45 900 43 1000 45 1130 140 1240 280 1318 430 1395 600 1440 760 1440 860 1437 930 1425 1005 1400L1180 1520 1468 1338 1380 1290 1000 900z"
          fill="#ccc"
          filter="url(#b4)"
        />
        <path d={bowl} fill="#171716" />
        <g clipPath="url(#bowlClip)">
          <path d="M41 430C44 600 90 730 160 845 220 930 330 1025 430 1085 540 1140 650 1163 740 1163 810 1160 850 1145 912 1130" fill="none" stroke="#4d463c" strokeWidth="36" filter="url(#b12)" />
          <path d="M1252 850C1290 780 1330 680 1338 500" fill="none" stroke="#453f37" strokeWidth="22" filter="url(#b12)" />
        </g>

        <path d="M912 1130Q1000 990 1090 905T1215 841L1252 848 1420 948 1300 1200 1212 1340z" fill="url(#pipe)" stroke="#0b0b0b" strokeWidth="1.500" />
        <path d={smooth(mouthOuter)} fill="#1e1e1d" stroke="#050505" strokeWidth="2" />
        <path d={smooth(mouthInner)} fill="url(#bore)" stroke="#050505" strokeWidth="2" />
        <g clipPath="url(#mouth)">
          <path d="M1205 1270Q1240 1330 1310 1350" stroke="#4b4c4c" strokeWidth="22" fill="none" filter="url(#b12)" />
        </g>

        <path d={smooth(rimOuter)} fill="url(#rim)" stroke="#070707" strokeWidth="2" />
        <path d={smooth(between(0.3))} fill="none" stroke="#373733" strokeWidth="5" />
        <path d={smooth(between(0.52))} fill="none" stroke="#0f0f0e" strokeWidth="3" />
        <path d={smooth(between(0.75))} fill="none" stroke="#2f2f2c" strokeWidth="3" />
        <path d={smooth(rimInner)} fill="#1e1d1b" />
        <g clipPath="url(#inside)">
          <path d="M110 600Q60 400 200 260T640 110" fill="none" stroke="#2b2c2c" strokeWidth="90" filter="url(#b22)" />
          <path d="M200 330Q330 210 520 180T830 240" fill="none" stroke="#303131" strokeWidth="34" filter="url(#b12)" />
          <path d="M560 140Q700 140 820 230" fill="none" stroke="#2f3031" strokeWidth="50" filter="url(#b22)" />
          <path d="M280 290Q400 215 560 205T760 245" fill="none" stroke="#1a1917" strokeWidth="30" filter="url(#b12)" />
          <path d="M250 460Q400 330 600 300T860 290" fill="none" stroke="#2a2a2a" strokeWidth="40" filter="url(#b12)" />
          <g filter="url(#b12)" fill="#404143">
            {ribs.map(([x, y, rx, ry]) => <ellipse key={x} cx={x} cy={y} rx={rx} ry={ry} />)}
          </g>
          <path d="M190 620Q190 480 250 430" fill="none" stroke="#343537" strokeWidth="30" filter="url(#b12)" />
          <path d="M95 560Q80 420 180 290" fill="none" stroke="#38362f" strokeWidth="24" filter="url(#b12)" />
          <path d="M150 560Q190 690 360 770" fill="none" stroke="#3a3b3d" strokeWidth="22" filter="url(#b12)" />
          <path d="M300 560Q430 350 760 340L820 420 640 560 400 720z" fill="#1a1917" filter="url(#b22)" />
          <path d="M440 690L620 600 850 370 930 400 900 620 800 860H540z" fill="#2c2a26" filter="url(#b22)" />
          <path d="M420 690Q500 810 560 850" fill="none" stroke="#353637" strokeWidth="36" filter="url(#b12)" />
          <path d="M450 690L640 590 860 370" fill="none" stroke="#302e2b" strokeWidth="34" filter="url(#b22)" />
          <path d="M810 830Q930 680 890 400" fill="none" stroke="#2c2b28" strokeWidth="28" filter="url(#b12)" />
          <path d="M960 360Q1040 560 950 830" fill="none" stroke="#161615" strokeWidth="70" filter="url(#b22)" />
          <path d="M1000 350Q1060 410 1050 450" fill="none" stroke="#303133" strokeWidth="44" filter="url(#b22)" />
          <path d="M1120 440Q1220 560 1180 740" fill="none" stroke="#35363a" strokeWidth="80" filter="url(#b22)" />
          <path d="M1060 780Q1060 700 1110 600" fill="none" stroke="#2d2e2f" strokeWidth="34" filter="url(#b12)" />
          <path d="M1288 460Q1300 590 1180 730" fill="none" stroke="#4c4b48" strokeWidth="14" filter="url(#b12)" />
          <path d="M800 120Q1100 170 1230 400" fill="none" stroke="#171716" strokeWidth="90" filter="url(#b22)" />
          <ellipse cx="682" cy="598" rx="30" ry="30" fill="#8d8982" filter="url(#b12)" />
          <ellipse cx="682" cy="597" rx="21" ry="21" fill="#fff" filter="url(#b4)" />
        </g>
        <path d={smooth(rimInner)} fill="none" stroke="#050505" strokeWidth="2" />
        <g clipPath="url(#lower)">
          <path d={smooth(between(1.03))} fill="none" stroke="#7d7c78" strokeWidth="1.600" />
        </g>
        <path d="M566 69v32M1070 806l7 31" stroke="#050505" strokeWidth="2" />
        <path d="M590 83Q670 77 740 84M620 879Q700 875 780 881" fill="none" stroke="#8a8984" strokeWidth="4" filter="url(#b4)" />
        <path d="M640 82h50M660 878h60" stroke="#e8e8e4" strokeWidth="2" opacity=".8" />
      </g>
    </svg>
  );
}

function ViewCube() {
  return (
    <svg viewBox="0 0 220 190" className="absolute right-0 top-[15px] w-[220px] h-[190px]" role="img" aria-label="View cube">
      <defs>
        <Blur id="cubeShadow" size="8" />
        <linearGradient id="cubeFace" x1="0" y1="0" x2="0" y2="1">
          <stop offset="0" stopColor="#f2f2f2" />
          <stop offset="1" stopColor="#e2e2e2" />
        </linearGradient>
      </defs>
      <path d="M50 128l64-40 64 40-64 46z" fill="#8f8f8f" opacity=".75" filter="url(#cubeShadow)" />
      <path d="M55 57l59 34v69l-52-39z" fill="url(#cubeFace)" />
      <path d="M172 57l-58 34v69l52-39z" fill="url(#cubeFace)" />
      <path d="M114 31l58 26-58 34-59-34z" fill="#f1f1f1" />
      <path d="M114 79l12 6v12l-12 6-12-6V85z" fill="#dfe1e6" />
      <path d="M114 31l58 26-6 64-52 39-52-39-7-64zM55 57l59 34 58-34M114 91v69" fill="none" stroke="#999" strokeDasharray="3 1" />
      <g className="font-bold font-['Open_Sans',sans-serif]" fill="#9ba0a6">
        <text transform="translate(72 107) skewY(26)" className="text-[13px]">LEFT</text>
        <text transform="translate(122 127) skewY(-30)" className="text-[13px]">FRONT</text>
        <text transform="translate(99 67) rotate(-27)" className="text-[14px]">TOP</text>
      </g>
      <path d="M54 117l60 44" stroke="#6fe07a" strokeWidth="1.800" />
      <path d="M114 161l60-43" stroke="#f06464" strokeWidth="1.800" />
      <path d="M114 79v83" stroke="#5050f0" strokeWidth="1.800" />
      <g className="text-[25px] font-['Open_Sans',sans-serif]">
        <text x="40" y="122" fill="#7ae87a">Y</text>
        <text x="173" y="122" fill="#f47474">X</text>
        <text x="106" y="76" fill="#6464f0">Z</text>
      </g>
    </svg>
  );
}

function NavBar() {
  return (
    <div className="flex h-10 items-center bg-[#f1f1f1] px-[6px] text-[#222]">
      <button aria-label="Orbit" className="mr-[10px] flex items-center gap-[10px]">
        <svg viewBox="0 0 26 26" className="w-[26px] h-[26px]" fill="none" stroke="#555a66" strokeWidth="1.200">
          <ellipse cx="13" cy="13" rx="5" ry="12" fill="#fff" />
          <path d="M18 8q7 2 7 5 0 5-12 5T1 13q0-3 7-5" />
          <path d="M16 4l4 3M19 11l4-3" stroke="#222" strokeWidth="2" />
          <path d="M13 9v7M9.500 12.500h7" stroke="#2c8ae0" strokeWidth="1.500" />
        </svg>
        <Caret />
      </button>
      <button aria-label="Look At" className="mr-[18px]">
        <svg viewBox="0 0 26 26" className="w-[26px] h-[26px]" stroke="#555a66" strokeWidth="1.300">
          <path d="M1 9h24v16H1z" fill="#eceef2" />
          <path d="M5 13h16v8H5z" fill="#a5a9b3" />
          <path d="M3 9l5-5h4l6-2-1 4 6-1v4" fill="#ddd" />
        </svg>
      </button>
      <button aria-label="Pan" className="mr-4">
        <svg viewBox="0 0 27 27" className="w-[27px] h-[27px]">
          <path d="M9 25l-4-6-4-6q0-3 3-1l3 3L5 6q1-3 3 0l2 6V3q1-3 3 0l1 9 1-9q2-2 3 1l-1 9 4-7q3-2 3 1l-4 9-1 9z" fill="#fff" stroke="#555" strokeWidth="1.300" />
        </svg>
      </button>
      <button aria-label="Zoom" className="mr-[17px]">
        <svg viewBox="0 0 27 27" className="w-[27px] h-[27px]">
          <path d="M16 16l9 9" stroke="#333" strokeWidth="4" />
          <circle cx="10" cy="10" r="9" fill="#eef6f4" stroke="#777" strokeWidth="1.500" />
          <path d="M23 1v7M20 4h6M20 10h6" stroke="#444" strokeWidth="1.400" />
        </svg>
      </button>
      <button aria-label="Fit" className="mr-[10px] flex items-center gap-2">
        <svg viewBox="0 0 27 27" className="w-[27px] h-[27px]">
          <path d="M16 17l9 9" stroke="#333" strokeWidth="4" />
          <circle cx="10" cy="11" r="9" fill="#eef6f4" stroke="#777" strokeWidth="1.500" />
          <path d="M5.500 6.500h9v9h-9z" fill="#fff" stroke="#555" strokeWidth="1.500" />
        </svg>
        <Caret />
      </button>
      <button aria-label="Display Settings" className="mr-[11px] flex items-center gap-1">
        <svg viewBox="0 0 26 26" className="w-[26px] h-[26px]" stroke="#555a66">
          <path d="M1 1h24v20H1z" fill="#e8eaf0" strokeWidth="1.500" />
          <path d="M4 4h18v14H4z" fill="#8fb2e2" />
          <path d="M10 21h6l1 3h3v2H6v-2h3z" fill="#ccc" />
        </svg>
        <Caret />
      </button>
      <button aria-label="Grid and Snaps" className="mr-3 flex items-center gap-1">
        <svg viewBox="0 0 26 26" className="w-[26px] h-[26px]">
          <path d="M1 1h24v24H1z" fill="#fff" stroke="#444" strokeWidth="1.500" />
          <path d="M5 1v24M9 1v24M13 1v24M17 1v24M21 1v24M1 5h24M1 9h24M1 13h24M1 17h24M1 21h24" stroke="#666b78" strokeWidth="1.200" />
          <path d="M1 13h24v12H1z" fill="#555" opacity=".3" />
        </svg>
        <Caret />
      </button>
      <button aria-label="Viewports" className="flex items-center gap-1">
        <svg viewBox="0 0 26 26" className="w-[26px] h-[26px]">
          <path d="M1 3h24v21H1z" fill="#8fb2dc" stroke="#3c5a8c" strokeWidth="1.500" />
          <path d="M13 3v21M1 13.500h24" stroke="#3c5a8c" strokeWidth="3" />
          <path d="M13 3v21M1 13.500h24" stroke="#c9dcf2" />
        </svg>
        <Caret />
      </button>
    </div>
  );
}

function CommentsBar() {
  return (
    <section className="ml-[6px] mt-[1px] flex h-[41px] w-[499px] items-center border-2 border-t-0 border-[#d0d0d0] border-l-[#e2e2e2] bg-[#f1f1f1] pl-10 pr-[17px]">
      <h2 className="flex-1 text-[18px] leading-6 text-[#666]">COMMENTS</h2>
      <button aria-label="Expand comments">
        <svg viewBox="0 0 14 14" className="w-[14px] h-[14px]">
          <rect width="14" height="14" rx="5" fill="#222" />
          <path d="M2 7h10M7 2v10" stroke="#ddd" strokeWidth="1.500" />
        </svg>
      </button>
    </section>
  );
}

/* ---------- timeline ---------- */

const features = {
  S: ["Sketch", SketchEditIcon],
  R: ["Revolve", RevolveIcon],
  M: ["Move", MoveIcon],
  C: ["Combine", CombineIcon],
  E: ["Extrude", ExtrudeIcon],
  F: ["Fillet", FilletIcon],
  P: ["Split Body", SplitIcon],
  D: ["Midplane", MidplaneIcon],
  O: ["Offset Face", OffsetFaceIcon],
  L: ["Plane Along Path", PathPlaneIcon],
};
const history = "SRSRMCRRRMRREEEFFFFERPSDSRRROEEREEOFSESPDSLLSSEEEEEE".split("");
const current = 19;

const transport = [
  ["Go to start", "M0 0h3v20H0zM19 0v20L4 10z", "mr-5"],
  ["Step back", "M16 0v20L0 10zM17 6h4v9h-4z", "mr-[22px]"],
  ["Play", "M0-3l20 13L0 23z", "mr-5"],
  ["Step forward", "M0 6h4v9H0zM5 0v20l16-10z", "mr-[21px]"],
  ["Go to end", "M0 0v20l15-10zM15 0h3v20h-3z", ""],
];

function Timeline() {
  return (
    <footer className="border-t-4 border-[#ccc] bg-[#f1f1f1]">
      <div className="flex h-3 border-t border-[#e0e0e0] pl-[7px]">
        <div className="h-[11px] w-[409px] rounded-[5px] bg-[#ccc]" />
      </div>
      <div className="flex h-[67px]">
        <div className="flex w-[236px] shrink-0 pl-[18px] pt-6 text-[#666]">
          {transport.map(([label, d, gap]) => (
            <button key={label} aria-label={label} className={`h-5 shrink-0 ${gap}`}>
              <svg viewBox="0 0 21 20" className="h-5 w-[21px] overflow-visible" fill="currentColor">
                <path d={d} />
              </svg>
            </button>
          ))}
        </div>
        <div className="shrink-0">
          <ol className="flex pt-[14px]">
            {history.map((h, i) => (
              <li key={i} className="relative flex w-10 flex-col items-center">
                <button aria-label={features[h][0]} className={i > current ? "opacity-25" : ""}>
                  <Icon of={features[h][1]} className="w-[27px] h-[27px]" />
                </button>
                <span className="mt-1 h-[9px] w-[3px] bg-[#ccc]" />
                {i === current && (
                  <svg viewBox="0 0 20 53" className="absolute -right-[10px] -top-[10px] z-10 h-[53px] w-5" fill="#666">
                    <path d="M0 0h20v6l-8 7v40H8V13L0 6z" />
                  </svg>
                )}
              </li>
            ))}
          </ol>
          <div className="ml-[19px] flex gap-[3px]">
            <span className="h-[3px] flex-1 bg-[#ccc]" />
            <span className="h-[3px] w-[7px] bg-[#ccc]" />
            <span className="-mr-2 h-[3px] w-[5px] bg-[#ccc]" />
          </div>
        </div>
        <button aria-label="Timeline settings" className="ml-auto mr-[22px] mt-5 h-[26px] w-[26px] text-[#777]">
          <Gear className="h-[26px] w-[26px]" />
        </button>
      </div>
    </footer>
  );
}

export default function App() {
  return (
    <div className="flex min-h-screen flex-col overflow-hidden bg-white font-['Open_Sans',sans-serif] text-[#333]">
      <TitleBar />
      <Ribbon />
      <main className="relative flex flex-1 flex-col justify-between">
        <Model />
        <ViewCube />
        <BrowserPanel />
        <div className="relative mb-2 grid grid-cols-[1fr_auto_1fr] items-start">
          <CommentsBar />
          <NavBar />
        </div>
      </main>
      <Timeline />
    </div>
  );
}
